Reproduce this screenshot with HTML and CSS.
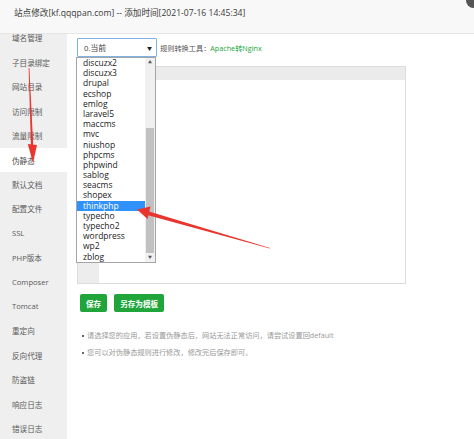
FILE: index.html
```html
<!DOCTYPE html>
<html>
<head>
<meta charset="utf-8">
<link rel="stylesheet" href="styles.css">
</head>
<body>
<div class="page">
  <div class="header">站点修改[kf.qqqpan.com] -- 添加时间[2021-07-16 14:45:34]</div>
  <div class="close"></div>
  <div class="main">
    <div class="sidebar">
      <div class="item first">域名管理</div>
      <div class="item">子目录绑定</div>
      <div class="item">网站目录</div>
      <div class="item">访问限制</div>
      <div class="item">流量限制</div>
      <div class="item active">伪静态</div>
      <div class="item">默认文档</div>
      <div class="item">配置文件</div>
      <div class="item">SSL</div>
      <div class="item">PHP版本</div>
      <div class="item">Composer</div>
      <div class="item">Tomcat</div>
      <div class="item">重定向</div>
      <div class="item">反向代理</div>
      <div class="item">防盗链</div>
      <div class="item">响应日志</div>
      <div class="item">错误日志</div>
    </div>
    <div class="content">
      <div class="toolbar">
        <div class="select"><span>0.当前</span><span class="caret">▼</span></div>
        <div class="tool">规则转换工具：<span class="green">Apache转Nginx</span></div>
      </div>
      <div class="editor">
        <div class="editor-head"></div>
        <div class="editor-body"><div class="gutter"></div></div>
      </div>
      <div class="buttons">
        <div class="btn">保存</div>
        <div class="btn">另存为模板</div>
      </div>
      <ul class="notes">
        <li>请选择您的应用，若设置伪静态后，网站无法正常访问，请尝试设置回default</li>
        <li>您可以对伪静态规则进行修改，修改完后保存即可。</li>
      </ul>
      <div class="dropdown">
        <div class="options">
          <div class="opt">discuzx2</div>
          <div class="opt">discuzx3</div>
          <div class="opt">drupal</div>
          <div class="opt">ecshop</div>
          <div class="opt">emlog</div>
          <div class="opt">laravel5</div>
          <div class="opt">maccms</div>
          <div class="opt">mvc</div>
          <div class="opt">niushop</div>
          <div class="opt">phpcms</div>
          <div class="opt">phpwind</div>
          <div class="opt">sablog</div>
          <div class="opt">seacms</div>
          <div class="opt">shopex</div>
          <div class="opt sel">thinkphp</div>
          <div class="opt">typecho</div>
          <div class="opt">typecho2</div>
          <div class="opt">wordpress</div>
          <div class="opt">wp2</div>
          <div class="opt">zblog</div>
        </div>
        <div class="scrollbar">
          <div class="sb-btn">▲</div>
          <div class="sb-track"><div class="sb-thumb"></div></div>
          <div class="sb-btn">▼</div>
        </div>
      </div>
    </div>
  </div>
  <svg class="arrows" width="474" height="439" viewBox="0 0 474 439">
    <polygon fill="#e8362e" points="28.6,68 29.4,68 33.3,147 31,147"/>
    <polygon fill="#e8362e" points="27.8,144 37,145 33,163"/>
    <polygon fill="#e8362e" points="270,248 269.8,248.6 148,215.2 149,211.6"/>
    <polygon fill="#e8362e" points="137,209.5 150.5,206.5 147.5,219"/>
  </svg>
</div>
</body>
</html>
```
FILE: styles.css
```css
* { box-sizing: border-box; }
html, body { margin: 0; padding: 0; background: #fff; }
body {
  font-family: "Open Sans", "Noto Sans CJK SC", sans-serif;
  color: #333;
}
.page {
  position: relative;
  width: 474px;
  height: 439px;
  overflow: hidden;
}
.header {
  height: 34px;
  background: #f8f8f8;
  border-bottom: 1px solid #e6e6e6;
  padding: 8px 0 0 14px;
  font-size: 8.6px;
  line-height: 10px;
  color: #3a3a3a;
  white-space: nowrap;
}
.close {
  position: absolute;
  right: -7px;
  top: -7px;
  width: 15px;
  height: 15px;
  border-radius: 50%;
  background: #555;
}
.main {
  display: flex;
  height: 405px;
}
.sidebar {
  width: 67px;
  background: #efefef;
  flex: none;
}
.item {
  height: 24.4px;
  display: flex;
  align-items: center;
  padding-left: 12px;
  font-size: 7.6px;
  color: #5a5a5a;
  white-space: nowrap;
}
.item.first {
  height: 16.4px;
  align-items: flex-start;
  line-height: 9px;
}
.item.active {
  background: #fff;
  color: #555;
}
.content {
  position: relative;
  flex: 1;
  padding: 4px 0 0 10px;
}
.toolbar {
  display: flex;
  align-items: center;
  height: 19px;
}
.select {
  width: 80px;
  height: 19px;
  border: 1px solid #7fb2e2;
  border-radius: 1px;
  display: flex;
  align-items: center;
  justify-content: space-between;
  padding: 0 4px 0 6px;
  font-size: 7.8px;
  color: #444;
}
.caret {
  font-size: 5px;
  color: #222;
}
.tool {
  margin-left: 3px;
  font-size: 7.2px;
  color: #555;
  white-space: nowrap;
}
.green { color: #20a53a; }
.editor {
  margin-top: 9px;
  width: 329px;
  height: 218px;
  border: 1px solid #dcdcdc;
  display: flex;
  flex-direction: column;
}
.editor-head {
  height: 13px;
  background: #ebebeb;
  flex: none;
}
.editor-body {
  flex: 1;
  display: flex;
}
.gutter {
  width: 21px;
  background: #ededed;
}
.buttons {
  display: flex;
  gap: 7px;
  margin: 10px 0 0 3px;
}
.btn {
  height: 18px;
  padding: 0 6px;
  background: #20a53a;
  border-radius: 2px;
  color: #fff;
  font-size: 7.6px;
  font-weight: 700;
  display: flex;
  align-items: center;
}
.notes {
  margin: 15px 0 0 0;
  padding: 0 0 0 10px;
  list-style: none;
}
.notes li {
  position: relative;
  font-size: 7.2px;
  line-height: 17px;
  color: #999;
  white-space: nowrap;
}
.notes li::before {
  content: "";
  position: absolute;
  left: -5px;
  top: 7.5px;
  width: 2px;
  height: 2px;
  background: #666;
}
.dropdown {
  position: absolute;
  left: 9px;
  top: 23px;
  width: 80px;
  height: 206px;
  background: #fff;
  border: 1px solid #a5a5a5;
  display: flex;
}
.options {
  flex: 1;
}
.opt {
  height: 10.2px;
  line-height: 10.2px;
  padding-left: 6px;
  font-size: 8.5px;
  color: #222;
  white-space: nowrap;
}
.opt.sel {
  background: #3191fa;
  color: #fff;
}
.scrollbar {
  width: 10px;
  background: #f0f0f0;
  display: flex;
  flex-direction: column;
}
.sb-btn {
  height: 9px;
  font-size: 4px;
  line-height: 9px;
  text-align: center;
  color: #555;
}
.sb-track {
  flex: 1;
  display: flex;
  flex-direction: column;
  justify-content: flex-end;
  padding: 0 1px;
}
.sb-thumb {
  height: 125px;
  background: #c1c1c1;
}
.arrows {
  position: absolute;
  left: 0;
  top: 0;
  pointer-events: none;
}
```
